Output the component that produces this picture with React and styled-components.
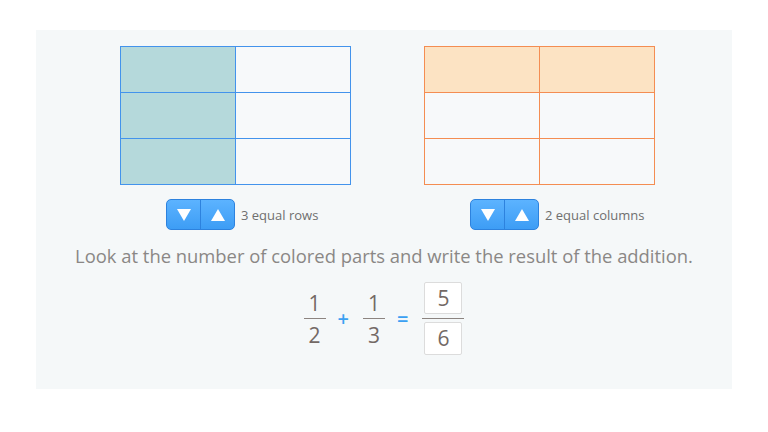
import styled, { createGlobalStyle } from "styled-components";

const GlobalStyle = createGlobalStyle`
  body {
    margin: 0;
    background: #ffffff;
    font-family: "Open Sans", "Liberation Sans", sans-serif;
  }
`;

const Page = styled.div`
  width: 768px;
  height: 432px;
  padding: 30px 0 0 36px;
  box-sizing: border-box;
`;

const Panel = styled.div`
  width: 696px;
  height: 359px;
  background: #f5f8f9;
  box-sizing: border-box;
  padding-top: 16px;
`;

const Models = styled.div`
  display: flex;
  gap: 73px;
  padding-left: 84px;
`;

const Model = styled.div`
  display: flex;
  flex-direction: column;
  width: 231px;
`;

const Grid = styled.div`
  display: grid;
  grid-template-columns: repeat(2, 114px);
  grid-template-rows: repeat(3, 45px);
  gap: 1px;
  padding: 1px;
  background: ${(p) => p.$line};
  width: 231px;
  height: 139px;
  box-sizing: border-box;
`;

const Cell = styled.div`
  background: ${(p) => (p.$filled ? p.$fill : "#f7f9fa")};
`;

const Control = styled.div`
  display: flex;
  margin-top: 14px;
  height: 31px;
`;

const ButtonSide = styled.div`
  width: 115px;
  display: flex;
  justify-content: flex-end;
`;

const Stepper = styled.div`
  display: flex;
  width: 69px;
  height: 31px;
  border: 1px solid #2d82de;
  border-radius: 5px;
  overflow: hidden;
  box-sizing: border-box;
  background: linear-gradient(#5cb3ff, #3d9df5);
`;

const StepButton = styled.button`
  flex: 1;
  border: none;
  background: transparent;
  padding: 0;
  display: flex;
  align-items: center;
  justify-content: center;
  & + & {
    border-left: 1px solid #2d82de;
  }
`;

const Label = styled.span`
  padding-left: 6px;
  font-size: 13px;
  line-height: 32px;
  color: #6f6f6f;
`;

const Instruction = styled.p`
  margin: 14px 0 0;
  text-align: center;
  font-size: 18.4px;
  line-height: 24px;
  color: #8a8785;
`;

const Equation = styled.div`
  display: flex;
  justify-content: center;
  align-items: center;
  margin-top: 14px;
  color: #736965;
`;

const Fraction = styled.div`
  display: flex;
  flex-direction: column;
  align-items: center;
  width: ${(p) => p.$width}px;
`;

const Digit = styled.div`
  font-size: 21px;
  font-weight: 500;
  line-height: 28px;
  text-align: center;
`;

const Bar = styled.div`
  align-self: stretch;
  height: 1px;
  background: #8c8480;
  margin: ${(p) => p.$margin};
`;

const AnswerBox = styled.div`
  width: 38px;
  height: ${(p) => p.$height}px;
  box-sizing: border-box;
  border: 1px solid #dcdcdc;
  border-radius: 2px;
  background: #ffffff;
  font-size: 21px;
  font-weight: 500;
  line-height: ${(p) => p.$height - 2}px;
  text-align: center;
`;

const Operator = styled.span`
  color: #3ba0f2;
  font-size: 20px;
  font-weight: 600;
  margin: 0 14px 0 12px;
  line-height: 20px;
`;

const Triangle = ({ up }) => (
  <svg width="16" height="14" viewBox="0 0 16 14">
    <polygon
      points={up ? "8,1 15,13 1,13" : "1,1 15,1 8,13"}
      fill="#ffffff"
    />
  </svg>
);

const models = [
  {
    line: "#4393ec",
    fill: "#b5d9db",
    filled: (r, c) => c === 0,
    label: "3 equal rows",
  },
  {
    line: "#f48d52",
    fill: "#fce3c3",
    filled: (r) => r === 0,
    label: "2 equal columns",
  },
];

const App = () => {
  return (
    <Page>
      <GlobalStyle />
      <Panel>
        <Models>
          {models.map((m) => (
            <Model key={m.label}>
              <Grid $line={m.line}>
                {[0, 1, 2].map((r) =>
                  [0, 1].map((c) => (
                    <Cell
                      key={`${r}-${c}`}
                      $fill={m.fill}
                      $filled={m.filled(r, c)}
                    />
                  ))
                )}
              </Grid>
              <Control>
                <ButtonSide>
                  <Stepper>
                    <StepButton aria-label="decrease">
                      <Triangle />
                    </StepButton>
                    <StepButton aria-label="increase">
                      <Triangle up />
                    </StepButton>
                  </Stepper>
                </ButtonSide>
                <Label>{m.label}</Label>
              </Control>
            </Model>
          ))}
        </Models>
        <Instruction>
          Look at the number of colored parts and write the result of the
          addition.
        </Instruction>
        <Equation>
          <Fraction $width={22}>
            <Digit>1</Digit>
            <Bar $margin="1px 0 2px" />
            <Digit>2</Digit>
          </Fraction>
          <Operator>+</Operator>
          <Fraction $width={22}>
            <Digit>1</Digit>
            <Bar $margin="1px 0 2px" />
            <Digit>3</Digit>
          </Fraction>
          <Operator>=</Operator>
          <Fraction $width={42}>
            <AnswerBox $height={32}>5</AnswerBox>
            <Bar $margin="4px 0 3px" />
            <AnswerBox $height={33}>6</AnswerBox>
          </Fraction>
        </Equation>
      </Panel>
    </Page>
  );
};

export default App;
